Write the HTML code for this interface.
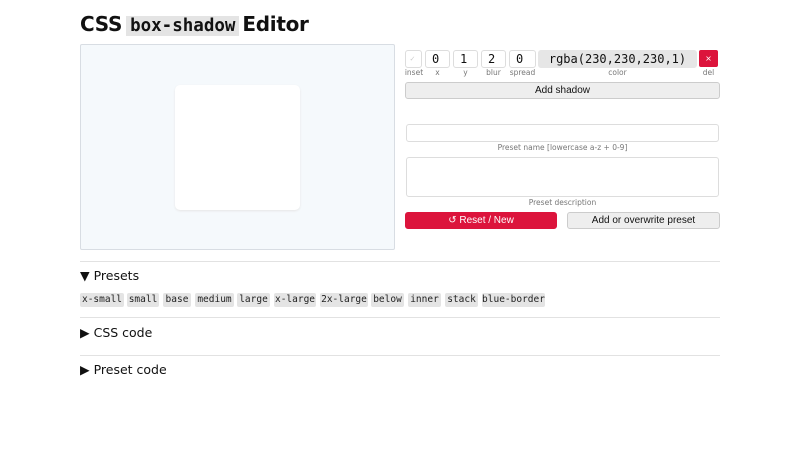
<!DOCTYPE html>
<html><head><meta charset="utf-8"><style>
*{box-sizing:border-box;margin:0;padding:0}
body{width:800px;height:450px;background:#fff;font-family:"DejaVu Sans","Liberation Sans",sans-serif;color:#111;position:relative;overflow:hidden}
.a{position:absolute}
h1{position:absolute;left:80px;top:11px;font-size:20px;font-weight:bold;white-space:nowrap;line-height:26px;letter-spacing:-0.3px}
h1 code{font-family:"DejaVu Sans Mono",monospace;background:#e4e4e4;padding:0 4px;font-weight:bold;font-size:17.5px;margin:0 3px 0 4px;letter-spacing:0}
.prev{left:80px;top:44px;width:315px;height:206px;background:#f5f9fc;border:1px solid #d8dde3;border-radius:2px}
.sq{left:175px;top:85px;width:125px;height:125px;background:#fff;border-radius:5px;box-shadow:0 1px 2px rgba(230,230,230,1)}
.inp{border:1px solid #ddd;border-radius:3px;background:#fff;height:18px;font-family:"DejaVu Sans Mono",monospace;font-size:12px;padding-left:6px;line-height:16px}
.lbl{font-size:7.5px;color:#777;text-align:center;top:68px}
.btn{border:1px solid #ccc;background:#eee;border-radius:3px;font-family:"Liberation Sans",sans-serif;font-size:10px;text-align:center}
.chip{top:293px;height:14px;background:#e4e4e4;border-radius:2px;font-family:"DejaVu Sans Mono",monospace;font-size:9.5px;line-height:14px;text-align:center;color:#222;white-space:nowrap;overflow:hidden}
.hr{left:80px;width:640px;height:1px;background:#e2e2e2}
.sum{left:80px;font-size:12.5px;line-height:16px}
</style></head><body>
<h1>CSS<code>box-shadow</code>Editor</h1>
<div class="a prev"></div>
<div class="a sq"></div>
<div class="a inp" style="left:405px;top:50px;width:17px;color:#ccc;font-size:8px;padding-left:4px">✓</div>
<div class="a inp" style="left:425px;top:50px;width:25px">0</div>
<div class="a inp" style="left:453px;top:50px;width:25px">1</div>
<div class="a inp" style="left:481px;top:50px;width:25px">2</div>
<div class="a inp" style="left:509px;top:50px;width:27px">0</div>
<div class="a inp" style="left:538px;top:50px;width:159px;background:#e6e6e6;border-color:#e6e6e6;text-align:center;padding:0">rgba(230,230,230,1)</div>
<div class="a" style="left:699px;top:50px;width:19px;height:17px;background:#dc143c;border-radius:2px;color:#fff;font-size:8px;text-align:center;line-height:17px">×</div>
<div class="a lbl" style="left:403px;width:22px">inset</div>
<div class="a lbl" style="left:425px;width:25px">x</div>
<div class="a lbl" style="left:453px;width:25px">y</div>
<div class="a lbl" style="left:481px;width:25px">blur</div>
<div class="a lbl" style="left:507px;width:31px">spread</div>
<div class="a lbl" style="left:538px;width:159px">color</div>
<div class="a lbl" style="left:699px;width:19px">del</div>
<div class="a btn" style="left:405px;top:82px;width:315px;height:17px;line-height:15px">Add shadow</div>
<div class="a inp" style="left:406px;top:124px;width:313px;height:18px"></div>
<div class="a lbl" style="left:406px;top:143px;width:313px">Preset name [lowercase a-z + 0-9]</div>
<div class="a inp" style="left:406px;top:157px;width:313px;height:40px"></div>
<div class="a lbl" style="left:406px;top:198px;width:313px">Preset description</div>
<div class="a btn" style="left:405px;top:212px;width:152px;height:17px;line-height:15px;background:#dc143c;border-color:#dc143c;color:#fff">↺ Reset / New</div>
<div class="a btn" style="left:567px;top:212px;width:153px;height:17px;line-height:15px">Add or overwrite preset</div>
<div class="a hr" style="top:261px"></div>
<div class="a sum" style="top:268px">▼ Presets</div>
<div class="a chip" style="left:80px;width:44px">x-small</div>
<div class="a chip" style="left:127px;width:32px">small</div>
<div class="a chip" style="left:163px;width:28px">base</div>
<div class="a chip" style="left:195px;width:39px">medium</div>
<div class="a chip" style="left:237px;width:33px">large</div>
<div class="a chip" style="left:274px;width:42px">x-large</div>
<div class="a chip" style="left:320px;width:48px">2x-large</div>
<div class="a chip" style="left:371px;width:33px">below</div>
<div class="a chip" style="left:408px;width:33px">inner</div>
<div class="a chip" style="left:445px;width:33px">stack</div>
<div class="a chip" style="left:482px;width:63px">blue-border</div>
<div class="a hr" style="top:317px"></div>
<div class="a sum" style="top:325px">▶ CSS code</div>
<div class="a hr" style="top:355px"></div>
<div class="a sum" style="top:362px">▶ Preset code</div>
</body></html>
